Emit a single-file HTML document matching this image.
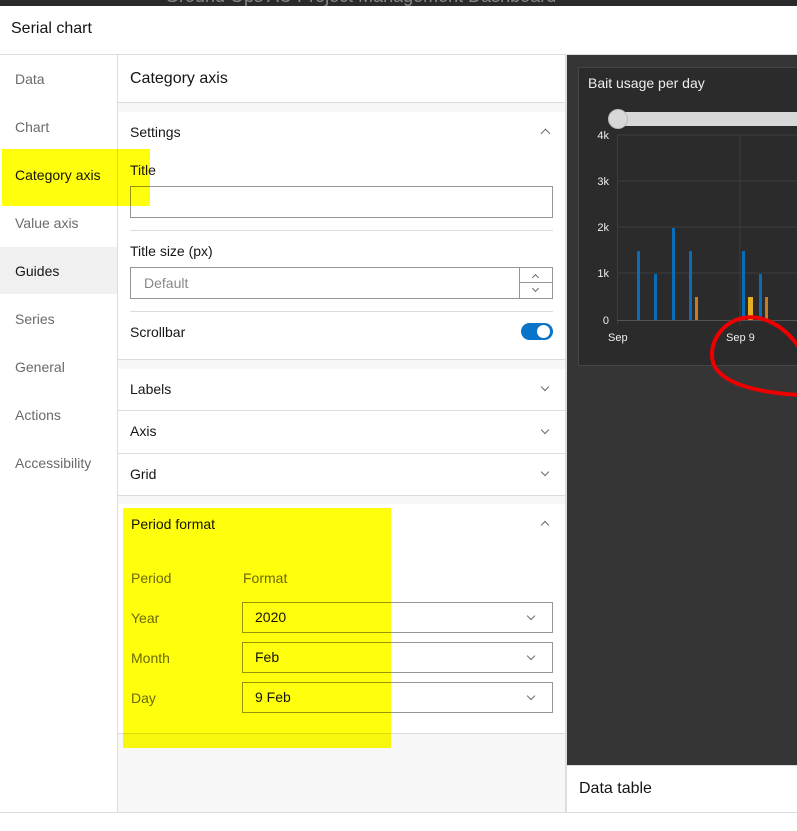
<!DOCTYPE html>
<html><head><meta charset="utf-8"><style>
*{box-sizing:border-box;margin:0;padding:0}
body{width:797px;height:831px;overflow:hidden;background:#fff;font-family:"Liberation Sans",sans-serif;position:relative;color:#151515}
.a{position:absolute}
.t{font-size:14px}
.g{color:#6a6a6a}
.inp{position:absolute;border:1px solid #959595;background:#fff}
.chev{position:absolute;width:7px;height:7px;border-right:1.3px solid #6a6a6a;border-bottom:1.3px solid #6a6a6a}
.dn{transform:rotate(45deg)}
.up{transform:rotate(-135deg)}
.hl{position:absolute;background:rgba(255,255,0,.95);mix-blend-mode:multiply}
.hr{position:absolute;height:1px;background:#dcdcdc}
</style></head><body>
<div class="a" style="left:0;top:0;width:797px;height:6px;background:#2a2a2a;overflow:hidden"><span class="a" style="left:165px;top:-14px;font-size:18px;color:#888">Ground Ops AU Project Management Dashboard</span></div>
<div class="a" style="left:11px;top:20px;font-size:16px">Serial chart</div>
<div class="hr" style="left:0;top:54px;width:797px"></div>
<!-- sidebar -->
<div class="a" style="left:117px;top:55px;width:1px;height:757px;background:#dcdcdc"></div>
<div class="a" style="left:0;top:247px;width:117px;height:47px;background:#f0f0f0"></div>
<div class="a t g" style="left:15px;top:71px">Data</div>
<div class="a t g" style="left:15px;top:119px">Chart</div>
<div class="a t" style="left:15px;top:167px">Category axis</div>
<div class="a t g" style="left:15px;top:215px">Value axis</div>
<div class="a t" style="left:15px;top:263px">Guides</div>
<div class="a t g" style="left:15px;top:311px">Series</div>
<div class="a t g" style="left:15px;top:359px">General</div>
<div class="a t g" style="left:15px;top:407px">Actions</div>
<div class="a t g" style="left:15px;top:455px">Accessibility</div>
<!-- middle -->
<div class="a" style="left:118px;top:55px;width:448px;height:757px;background:#f7f7f7"></div>
<div class="a" style="left:565px;top:55px;width:2px;height:757px;background:#dcdcdc"></div>
<div class="a" style="left:118px;top:55px;width:447px;height:48px;background:#fff;border-bottom:1px solid #dcdcdc"></div>
<div class="a" style="left:130px;top:70px;font-size:16px">Category axis</div>
<div class="a" style="left:118px;top:112px;width:447px;height:248px;background:#fff;border-bottom:1px solid #dcdcdc"></div>
<div class="a t" style="left:130px;top:124px">Settings</div>
<div class="chev up" style="left:542px;top:130px"></div>
<div class="a t" style="left:130px;top:162px">Title</div>
<div class="inp" style="left:130px;top:186px;width:423px;height:32px"></div>
<div class="hr" style="left:130px;top:230px;width:423px"></div>
<div class="a t" style="left:130px;top:243px">Title size (px)</div>
<div class="inp" style="left:130px;top:267px;width:423px;height:32px"></div>
<div class="a" style="left:519px;top:267px;width:1px;height:32px;background:#959595"></div>
<div class="a" style="left:519px;top:282px;width:34px;height:1px;background:#959595"></div>
<div class="chev up" style="left:533px;top:275px;width:5px;height:5px"></div>
<div class="chev dn" style="left:533px;top:286px;width:5px;height:5px"></div>
<div class="a t" style="left:144px;top:275px;color:#888">Default</div>
<div class="hr" style="left:130px;top:311px;width:423px"></div>
<div class="a t" style="left:130px;top:324px">Scrollbar</div>
<div class="a" style="left:521px;top:323px;width:32px;height:17px;border-radius:9px;background:#0a74c8"></div>
<div class="a" style="left:537px;top:325px;width:13px;height:13px;border-radius:50%;background:#fff"></div>
<div class="a" style="left:118px;top:369px;width:447px;height:126px;background:#fff"></div>
<div class="hr" style="left:118px;top:410px;width:447px"></div>
<div class="hr" style="left:118px;top:453px;width:447px"></div>
<div class="hr" style="left:118px;top:495px;width:447px"></div>
<div class="a t" style="left:130px;top:381px">Labels</div>
<div class="a t" style="left:130px;top:423px">Axis</div>
<div class="a t" style="left:130px;top:466px">Grid</div>
<div class="chev dn" style="left:542px;top:384px;width:6px;height:6px"></div>
<div class="chev dn" style="left:542px;top:427px;width:6px;height:6px"></div>
<div class="chev dn" style="left:542px;top:469px;width:6px;height:6px"></div>
<div class="a" style="left:118px;top:504px;width:447px;height:230px;background:#fff;border-bottom:1px solid #dcdcdc"></div>
<div class="a t" style="left:131px;top:516px">Period format</div>
<div class="chev up" style="left:542px;top:522px;width:6px;height:6px"></div>
<div class="a t g" style="left:131px;top:570px">Period</div>
<div class="a t g" style="left:243px;top:570px">Format</div>
<div class="a t g" style="left:131px;top:610px">Year</div>
<div class="a t g" style="left:131px;top:650px">Month</div>
<div class="a t g" style="left:131px;top:690px">Day</div>
<div class="inp" style="left:242px;top:602px;width:311px;height:31px"></div>
<div class="inp" style="left:242px;top:642px;width:311px;height:31px"></div>
<div class="inp" style="left:242px;top:682px;width:311px;height:31px"></div>
<div class="a t" style="left:255px;top:609px">2020</div>
<div class="a t" style="left:255px;top:649px">Feb</div>
<div class="a t" style="left:255px;top:689px">9 Feb</div>
<div class="chev dn" style="left:528px;top:613px;width:6px;height:6px"></div>
<div class="chev dn" style="left:528px;top:653px;width:6px;height:6px"></div>
<div class="chev dn" style="left:528px;top:693px;width:6px;height:6px"></div>
<div class="hr" style="left:0;top:812px;width:797px"></div>
<!-- right -->
<div class="a" style="left:567px;top:55px;width:230px;height:710px;background:#353535"></div>
<div class="a" style="left:578px;top:67px;width:225px;height:299px;background:#2b2b2b;border:1px solid #454545"></div>
<div class="a" style="left:588px;top:75px;font-size:14px;color:#eee">Bait usage per day</div>
<div class="a" style="left:614px;top:112px;width:190px;height:14px;background:#d8d8d8;border-radius:7px"></div>
<div class="a" style="left:608px;top:109px;width:20px;height:20px;background:#d8d8d8;border-radius:50%;border:1px solid #bbb"></div>
<svg class="a" style="left:567px;top:55px" width="230" height="350">
<g stroke="#3c3c3c" stroke-width="1"><line x1="50" y1="80" x2="230" y2="80"/><line x1="50" y1="126" x2="230" y2="126"/><line x1="50" y1="172" x2="230" y2="172"/><line x1="50" y1="218" x2="230" y2="218"/><line x1="173" y1="80" x2="173" y2="270"/><line x1="50.5" y1="80" x2="50.5" y2="270"/></g>
<line x1="50" y1="265.5" x2="230" y2="265.5" stroke="#555"/>
<g font-family="Liberation Sans" font-size="11" fill="#eee" text-anchor="end"><text x="42" y="84">4k</text><text x="42" y="130">3k</text><text x="42" y="176">2k</text><text x="42" y="222">1k</text><text x="42" y="269">0</text></g>
<g font-family="Liberation Sans" font-size="11" fill="#eee"><text x="41" y="286">Sep</text><text x="159" y="286">Sep 9</text></g>
<g fill="#0a6db5"><rect x="70" y="196" width="3" height="69"/><rect x="87" y="219" width="3" height="46"/><rect x="105" y="173" width="3" height="92"/><rect x="122" y="196" width="3" height="69"/><rect x="175" y="196" width="3" height="69"/><rect x="192" y="219" width="3" height="46"/></g>
<g fill="#c77c24"><rect x="128" y="242" width="3" height="23"/><rect x="198" y="242" width="3" height="23"/></g>
<rect x="181" y="242" width="5" height="23" fill="#e8b020"/>
<path d="M232 292 C215 268 192 258 172 264 C152 270 140 292 147 310 C158 332 200 338 232 340" fill="none" stroke="#e00" stroke-width="4"/>
</svg>
<div class="a" style="left:567px;top:765px;width:230px;height:47px;background:#fff;border-top:1px solid #dcdcdc"></div>
<div class="a" style="left:579px;top:780px;font-size:16px">Data table</div>
<!-- highlights -->
<div class="hl" style="left:2px;top:149px;width:148px;height:57px"></div>
<div class="hl" style="left:123px;top:508px;width:268px;height:240px"></div>
</body></html>
